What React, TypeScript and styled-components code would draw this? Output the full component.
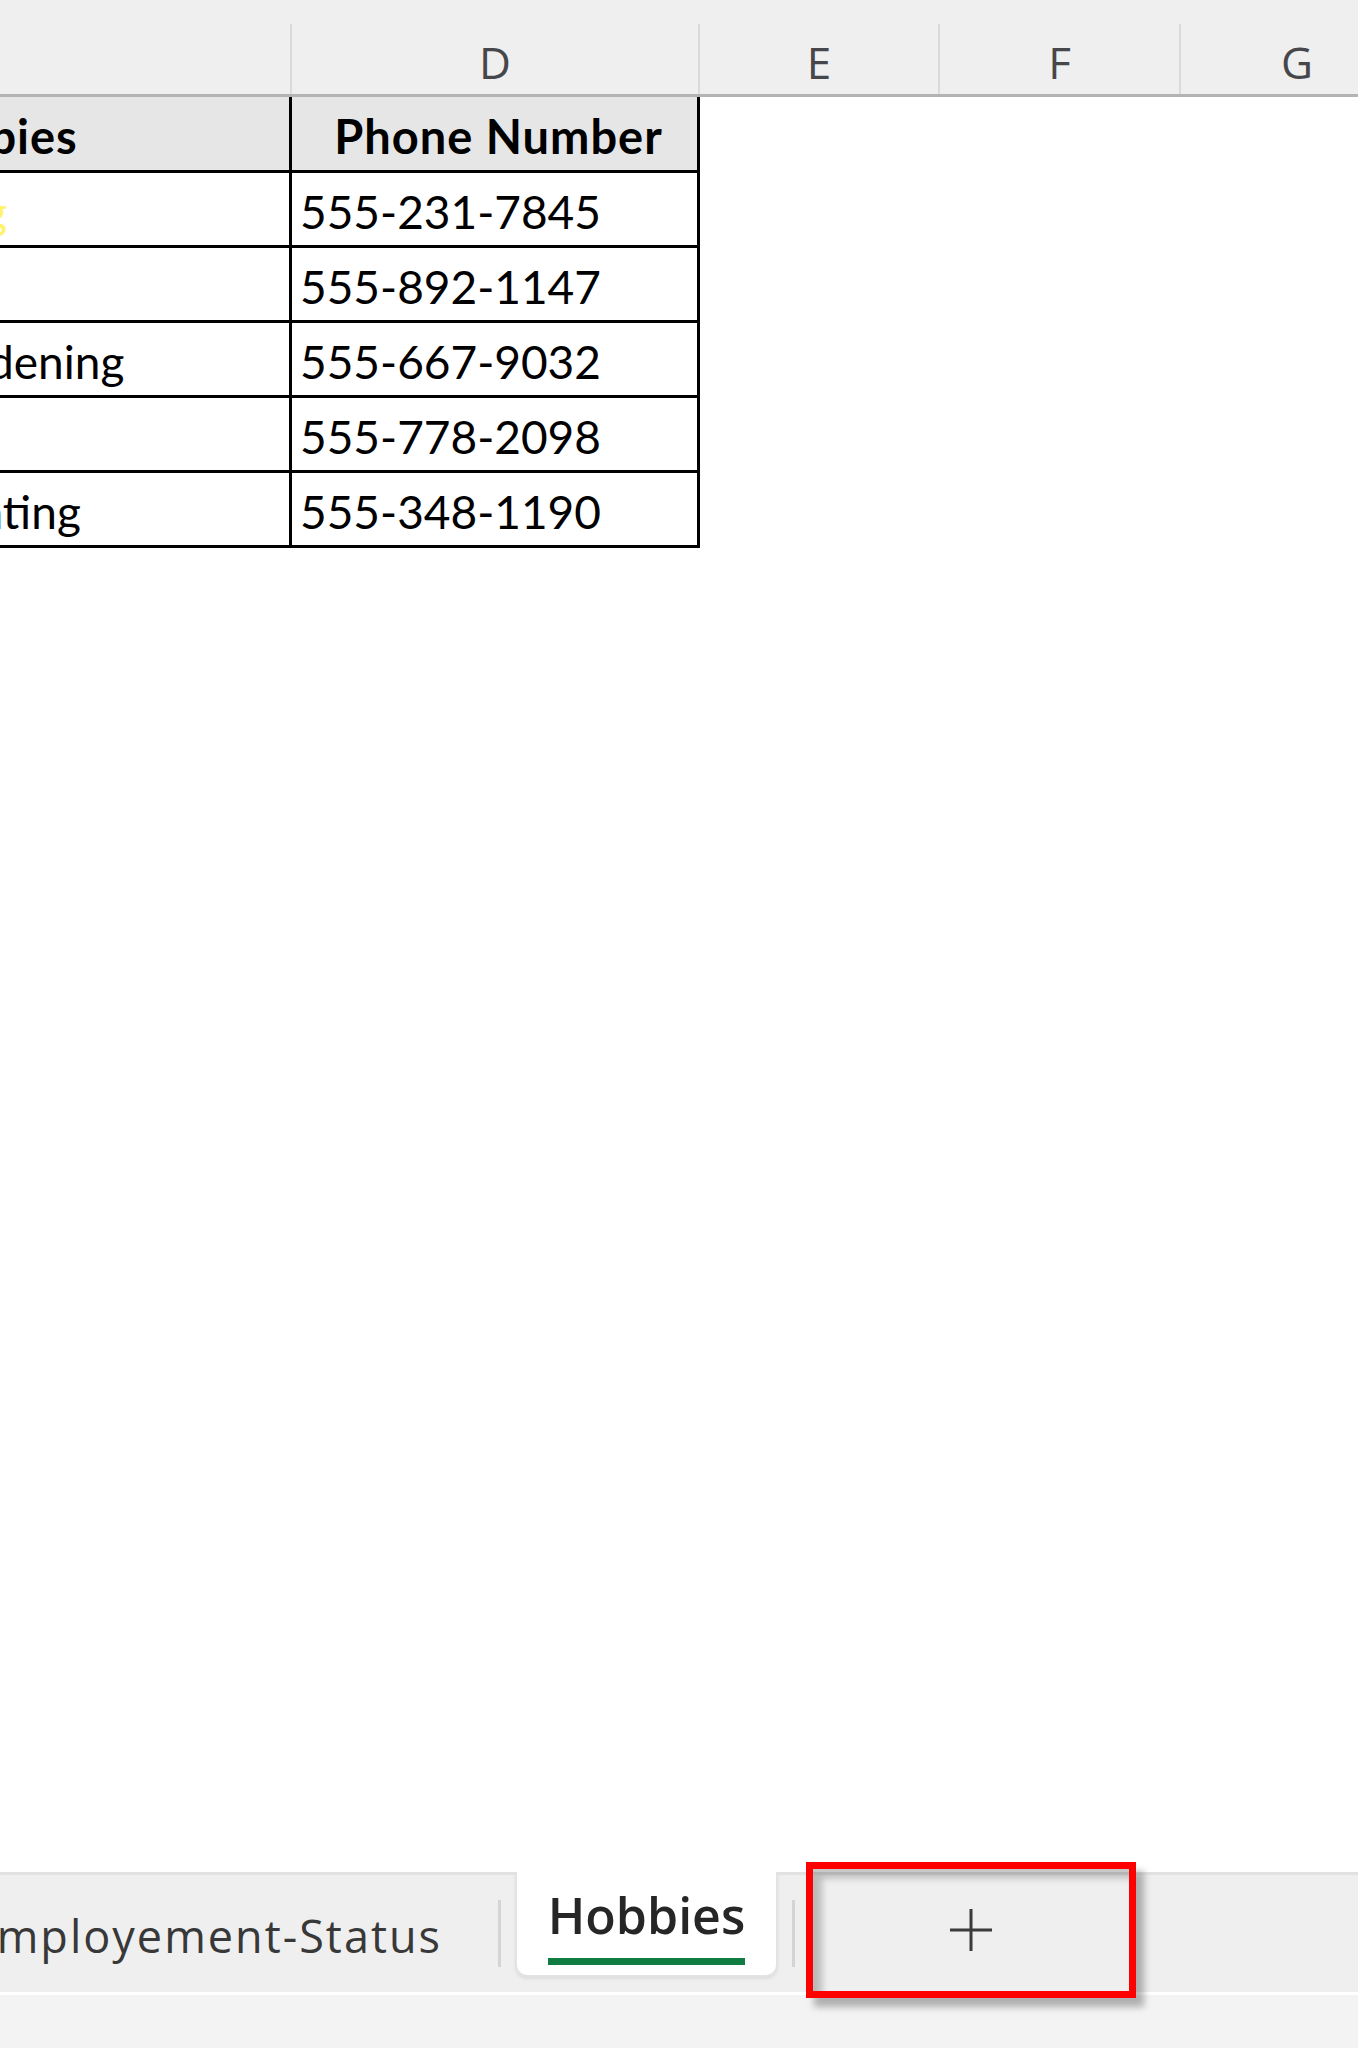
import React from 'react';
import styled, { createGlobalStyle } from 'styled-components';

const GlobalStyle = createGlobalStyle`
  html, body {
    margin: 0;
    padding: 0;
    background: #ffffff;
  }
  * {
    box-sizing: border-box;
  }
`;

// column widths, C is scrolled mostly out of view
const COLS = [614, 408, 240, 241, 234];
const SCROLL_X = 322;

const StyledApp = styled.div`
  width: 1358px;
  height: 2048px;
  display: flex;
  flex-direction: column;
  overflow: hidden;
  font-family: Lato, 'Noto Sans', sans-serif;
`;

const Viewport = styled.div`
  flex: 1;
  overflow: hidden;
  background: #ffffff;
`;

const Canvas = styled.div`
  margin-left: -${SCROLL_X}px;
  width: ${COLS.reduce((a, b) => a + b, 0)}px;
`;

const LetterBar = styled.div`
  height: 97px;
  display: grid;
  grid-template-columns: ${COLS.map((c) => `${c}px`).join(' ')};
  background: #efefef;
  border-bottom: 3px solid #b3b3b3;
`;

const Letter = styled.div`
  margin-top: 24px;
  height: 70px;
  display: flex;
  align-items: center;
  justify-content: center;
  padding-top: 6px;
  border-right: 2px solid #dadada;
  font-family: 'Open Sans', Lato, sans-serif;
  font-size: 44px;
  color: #46474a;
`;

const Table = styled.div`
  display: grid;
  grid-template-columns: ${COLS[0]}px ${COLS[1]}px;
`;

const Cell = styled.div<{ head?: boolean; align?: 'left' | 'center'; tint?: string }>`
  height: ${({ head }) => (head ? 76 : 75)}px;
  display: flex;
  align-items: center;
  justify-content: ${({ align }) => (align === 'center' ? 'center' : 'flex-start')};
  padding: 4px 0 0 8px;
  border-right: 3px solid #000;
  border-bottom: 3px solid #000;
  background: ${({ head }) => (head ? '#e6e6e6' : '#ffffff')};
  font-size: ${({ head }) => (head ? 47 : 46)}px;
  font-weight: ${({ head }) => (head ? 700 : 400)};
  letter-spacing: ${({ head }) => (head ? 1 : 0)}px;
  color: ${({ tint }) => tint || '#000'};
  white-space: nowrap;
  overflow: hidden;
`;

const TabBar = styled.div`
  height: 123px;
  display: flex;
  align-items: center;
  background: #efefef;
  border-top: 3px solid #e2e2e2;
  border-bottom: 3px solid #ffffff;
  font-family: 'Open Sans', Lato, sans-serif;
`;

const InactiveTab = styled.div`
  width: 498px;
  flex-shrink: 0;
  align-self: stretch;
  display: flex;
  justify-content: flex-end;
  padding: 30px 56px 0 0;
  overflow: hidden;
  white-space: nowrap;
  font-size: 45px;
  letter-spacing: 2px;
  color: #383838;
`;

const TabSep = styled.div<{ gap: number }>`
  width: 3px;
  height: 67px;
  flex-shrink: 0;
  margin-left: ${({ gap }) => gap}px;
  background: #d4d4d4;
`;

const ActiveTab = styled.div`
  width: 263px;
  height: 105px;
  margin-left: 14px;
  align-self: flex-start;
  margin-top: -3px;
  flex-shrink: 0;
  display: flex;
  justify-content: center;
  padding-top: 16px;
  background: #ffffff;
  border: 2px solid #e3e3e3;
  border-top: none;
  border-radius: 0 0 12px 12px;
  box-shadow: 0 2px 3px rgba(0, 0, 0, 0.07);
`;

const ActiveLabel = styled.span`
  display: block;
  height: 77px;
  line-height: 1.1;
  padding-bottom: 14px;
  border-bottom: 7px solid #107c41;
  font-size: 50px;
  font-weight: 600;
  color: #262626;
`;

const PlusButton = styled.div`
  position: relative;
  width: 330px;
  margin-left: 11px;
  align-self: stretch;
  flex-shrink: 0;
  display: flex;
  align-items: center;
  justify-content: center;
  padding-bottom: 8px;
`;

// annotation frame drawn over the add-sheet button
const Highlight = styled.div`
  position: absolute;
  top: -13px;
  bottom: -6px;
  left: 0;
  right: 0;
  border: 7px solid #ff0000;
  box-shadow: 8px 9px 7px rgba(0, 0, 0, 0.28), inset 9px 9px 7px rgba(0, 0, 0, 0.22);
  pointer-events: none;
`;

const StatusBar = styled.div`
  height: 53px;
  background: #f3f3f3;
`;

const PlusIcon = () => (
  <svg width='42' height='42' viewBox='0 0 42 42'>
    <path d='M21 0V42M0 21H42' stroke='#3b3b3b' strokeWidth='3' fill='none' />
  </svg>
);

const rows = [
  { hobby: 'Boxing, Reading', phone: '555-231-7845', tint: '#fff36b' },
  { hobby: 'Chess', phone: '555-892-1147' },
  { hobby: 'Swimming, Gardening', phone: '555-667-9032' },
  { hobby: 'Yoga', phone: '555-778-2098' },
  { hobby: 'Gardening, Painting', phone: '555-348-1190' },
];

const App = () => {
  return (
    <StyledApp>
      <GlobalStyle />
      <Viewport>
        <Canvas>
          <LetterBar>
            {['C', 'D', 'E', 'F', 'G'].map((l) => (
              <Letter key={l}>{l}</Letter>
            ))}
          </LetterBar>
          <Table>
            <Cell head align='center'>
              Hobbies
            </Cell>
            <Cell head align='center'>
              Phone Number
            </Cell>
            {rows.map((r) => (
              <React.Fragment key={r.phone}>
                <Cell tint={r.tint}>{r.hobby}</Cell>
                <Cell>{r.phone}</Cell>
              </React.Fragment>
            ))}
          </Table>
        </Canvas>
      </Viewport>

      <TabBar>
        <InactiveTab>Employement-Status</InactiveTab>
        <TabSep gap={0} />
        <ActiveTab>
          <ActiveLabel>Hobbies</ActiveLabel>
        </ActiveTab>
        <TabSep gap={14} />
        <PlusButton>
          <PlusIcon />
          <Highlight />
        </PlusButton>
      </TabBar>
      <StatusBar />
    </StyledApp>
  );
};

export default App;
